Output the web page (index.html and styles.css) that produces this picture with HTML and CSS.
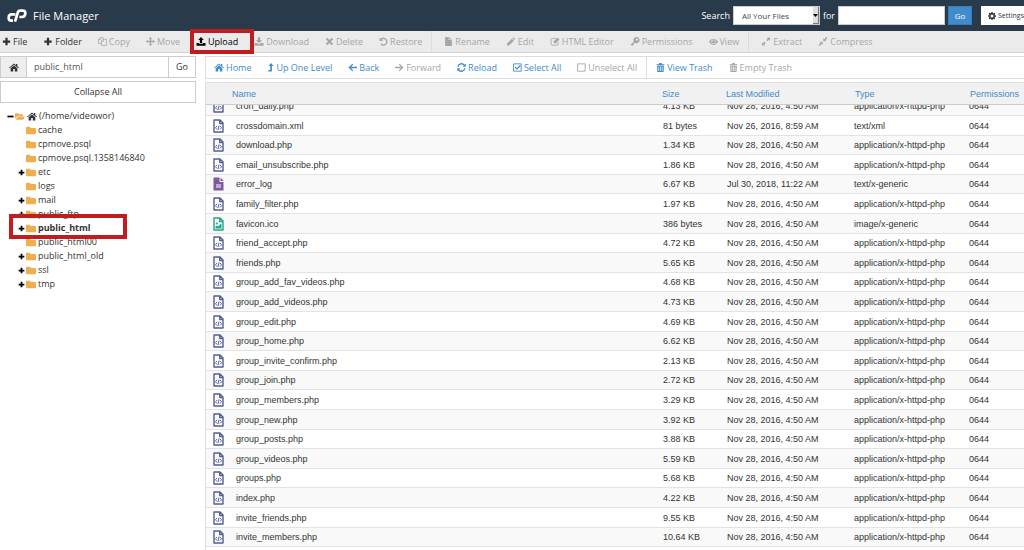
FILE: index.html
```html
<!DOCTYPE html>
<html lang="en">
  <head>
    <meta charset="UTF-8" />
    <title>File Manager</title>
    <link rel="stylesheet" href="styles.css">
  </head>
  <body>
    <!-- Icon sprite -->
    <svg class="sprite" aria-hidden="true">
      <symbol id="i-plus" viewBox="0 0 16 16"><path d="M6 1.500h4v4.500h4.500v4H10v4.500H6V10H1.500V6H6z"/></symbol>
      <symbol id="i-minus" viewBox="0 0 16 16"><path d="M1 6h14v4H1z"/></symbol>
      <symbol id="i-copy" viewBox="0 0 16 16"><path fill="none" stroke="currentColor" stroke-width="1.300" stroke-linejoin="round" d="M6 11.500H1V4.500L4 1h5v3M4 1v3.500H1M6 7.500L9 4h6v11H6zM9.500 4v3.500H6"/></symbol>
      <symbol id="i-move" viewBox="0 0 16 16"><path d="M8 0l3.200 3.200H9.200v3.600h3.600V4.800L16 8l-3.200 3.200V9.200H9.200v3.600h2L8 16l-3.200-3.200h2V9.200H3.200v2L0 8l3.200-3.200v2h3.600V3.200h-2z"/></symbol>
      <symbol id="i-upload" viewBox="0 0 16 16"><path d="M8 0l5 5.500h-3V11H6V5.500H3zM0 10.500h4.800V12.500h6.400v-2H16V15.500H0z"/></symbol>
      <symbol id="i-download" viewBox="0 0 16 16"><path d="M6 0.500h4V5.500h3.500L8 11 2.500 5.500H6zM0 10.500h4.500L8 13.500l3.500-3H16V15.500H0z"/></symbol>
      <symbol id="i-times" viewBox="0 0 16 16"><path d="M4 1.500l4 4 4-4L14.500 4l-4 4 4 4-2.500 2.500-4-4-4 4L1.500 12l4-4-4-4z"/></symbol>
      <symbol id="i-undo" viewBox="0 0 16 16"><path d="M1 1v6h6L5 5a4.500 4.500 0 1 1-.5 6.200L2.700 13A7 7 0 1 0 3.100 3.100z"/></symbol>
      <symbol id="i-file" viewBox="0 0 16 16"><path d="M2 0h6.500v5.500H14V16H2zM9.800 0L14 4.300H9.800z"/></symbol>
      <symbol id="i-pencil" viewBox="0 0 16 16"><path d="M12 .500L15.500 4 14 5.500 10.500 2zM9.500 3L13 6.500 4.500 15H1v-3.500z"/></symbol>
      <symbol id="i-edit" viewBox="0 0 16 16"><path fill="none" stroke="currentColor" stroke-width="1.500" d="M10 2.500H3A2 2 0 0 0 1 4.500V12.500a2 2 0 0 0 2 2h8.500a2 2 0 0 0 2-2V9"/><path d="M12.500 1L16 4.500l-6.500 6.500H6V7.500z"/></symbol>
      <symbol id="i-key" viewBox="0 0 16 16"><path fill-rule="evenodd" d="M10.500 0a5.500 5.500 0 1 1-3 10L5.500 12l1 1-1.300 1.300-1-1-.7.7 1 1L3 16 .500 13.500 6 8a5.500 5.500 0 0 1 4.500-8zM11.500 2.500a2 2 0 1 0 .1 4 2 2 0 0 0-.1-4z"/></symbol>
      <symbol id="i-eye" viewBox="0 0 16 16"><path fill-rule="evenodd" d="M0 8.500C2 5 5 3 8 3s6 2 8 5.500C14 12 11 14 8 14s-6-2-8-5.500zM8 4.500a4 4 0 1 0 0 8 4 4 0 0 0 0-8z"/><circle cx="8" cy="8.500" r="3"/><path fill="#ebebeb" d="M6 8a2 2 0 0 1 2-2v1a1 1 0 0 0-1 1z"/></symbol>
      <symbol id="i-expand" viewBox="0 0 16 16"><path d="M9.500 1H15v5.500L13.200 4.700 10.500 7.500 8.500 5.500l2.800-2.700zM1 9.500l1.800 1.800L5.500 8.500l2 2-2.700 2.700L6.500 15H1z"/></symbol>
      <symbol id="i-compress" viewBox="0 0 16 16"><path d="M8.500 2l1.800 1.800L14 0l2 2-3.800 3.700L14 7.500H8.500zM2 8.500h5.500V14l-1.800-1.800L2 16l-2-2 3.800-3.700z"/></symbol>
      <symbol id="i-home" viewBox="0 0 18 16"><path d="M9 4.200l6 5V15h-4.500v-4.500h-3V15H3V9.200zM9 .800l3.500 3V1.500H15v4.300l3 2.500-1 1.200L9 2.900 1 9.500 0 8.300z"/></symbol>
      <symbol id="i-level" viewBox="0 0 12 16"><path d="M7 0l4.500 5.500H8.500V15H1L3.500 12.500h2V5.500h-3z"/></symbol>
      <symbol id="i-left" viewBox="0 0 16 16"><path fill="none" stroke="currentColor" stroke-width="2.400" d="M8.500 2L2.500 8l6 6M3 8h13"/></symbol>
      <symbol id="i-right" viewBox="0 0 16 16"><path fill="none" stroke="currentColor" stroke-width="2.400" d="M7.500 2l6 6-6 6M13 8H0"/></symbol>
      <symbol id="i-reload" viewBox="0 0 16 16"><path d="M15.500 1v5.500H10l2-2A5 5 0 0 0 3.200 6.500H.700A7.300 7.300 0 0 1 13.600 2.800zM.500 15V9.500H6l-2 2a5 5 0 0 0 8.800-2h2.500a7.300 7.300 0 0 1-12.900 3.700z"/></symbol>
      <symbol id="i-checked" viewBox="0 0 16 16"><path fill="none" stroke="currentColor" stroke-width="1.600" d="M1 1.500h13.500v13H1z"/><path fill="none" stroke="currentColor" stroke-width="2.200" d="M4 7.500l3 3 6-6"/></symbol>
      <symbol id="i-unchecked" viewBox="0 0 16 16"><path fill="none" stroke="currentColor" stroke-width="1.600" d="M1 1.500h13.500v13H1z"/></symbol>
      <symbol id="i-trash" viewBox="0 0 14 16"><path fill-rule="evenodd" d="M5 0h4l1 2h4v1.700H0V2h4zM1 4.500h12L12.500 16h-11zM3.500 6v8h1.200V6zM6.400 6v8h1.200V6zM9.300 6v8h1.200V6z"/></symbol>
      <symbol id="i-cog" viewBox="0 0 16 16"><path fill-rule="evenodd" d="M6.800 0h2.400l.4 2.200 1.400.6L12.900 1.500l1.700 1.700-1.300 1.900.6 1.400 2.100.4v2.400l-2.200.4-.6 1.400 1.300 1.900-1.700 1.700-1.900-1.300-1.400.6L9.200 16H6.800l-.4-2.200-1.400-.6-1.900 1.300-1.700-1.700 1.300-1.900-.6-1.400L0 9.200V6.800l2.200-.4.600-1.400L1.500 3.100l1.700-1.700L5 2.700l1.400-.5zM8 5a3 3 0 1 0 0 6 3 3 0 0 0 0-6z"/></symbol>
      <symbol id="i-folder" viewBox="0 0 16 14"><path d="M0 2.500A1.500 1.500 0 0 1 1.500 1H6l1.500 2h7A1.500 1.500 0 0 1 16 4.500v7a1.500 1.500 0 0 1-1.500 1.500h-13A1.500 1.500 0 0 1 0 11.500z"/></symbol>
      <symbol id="i-folder-open" viewBox="0 0 18 14"><path d="M0 2.500A1.500 1.500 0 0 1 1.500 1H5.500L7 3h6a1.500 1.500 0 0 1 1.500 1.500V6H5L0 11zM5.500 7H18l-3.500 6H1z"/></symbol>
      <symbol id="i-code" viewBox="0 0 22 28"><path fill="none" stroke="currentColor" stroke-width="2.800" stroke-linejoin="round" d="M2 2h12l6 6v18H2zM13.500 2v7H20"/><path fill="none" stroke="currentColor" stroke-width="1.900" d="M8 14l-3 3.500 3 3.500M14 14l3 3.500-3 3.500M12 13l-2 9"/></symbol>
      <symbol id="i-text" viewBox="0 0 22 28"><path d="M2 1h11v9h8v17H1V2zM15 1l6 7h-6z"/><path stroke="#fff" stroke-width="2" d="M6 16h10M6 20h10"/></symbol>
      <symbol id="i-image" viewBox="0 0 22 28"><path fill="none" stroke="currentColor" stroke-width="2.800" stroke-linejoin="round" d="M2 2h12l6 6v18H2zM13.500 2v7H20"/><circle cx="7.500" cy="13" r="2"/><path d="M5 23v-4l3-2 2 2 6-6 1 1v9z"/></symbol>
    </svg>

    <header class="topbar">
      <svg class="logo" viewBox="0 0 60 42" aria-hidden="true"><path d="M25 16H14C8 16 5 20 5 26s3 9 8 9h5M24 38l8-26c1-5 4-7 8-7h7c6 0 8 4 8 8 0 7-4 11-10 11h-8"/></svg>
      <h1>File Manager</h1>
      <form class="search">
        <label for="scope">Search</label>
        <select id="scope"><option>All Your Files</option></select>
        <label for="query">for</label>
        <input id="query" type="text">
        <button class="btn-primary" type="button">Go</button>
      </form>
      <button class="settings" type="button"><svg class="icon"><use href="#i-cog"/></svg>Settings</button>
    </header>

    <nav class="toolbar">
      <button><svg class="icon"><use href="#i-plus"/></svg>File</button>
      <button><svg class="icon wide"><use href="#i-plus"/></svg>Folder</button>
      <button disabled><svg class="icon"><use href="#i-copy"/></svg>Copy</button>
      <button disabled><svg class="icon"><use href="#i-move"/></svg>Move</button>
      <button class="marked"><svg class="icon wide"><use href="#i-upload"/></svg>Upload</button>
      <button disabled><svg class="icon wide"><use href="#i-download"/></svg>Download</button>
      <button disabled><svg class="icon"><use href="#i-times"/></svg>Delete</button>
      <button disabled><svg class="icon"><use href="#i-undo"/></svg>Restore</button>
      <span class="divider"></span>
      <button disabled><svg class="icon"><use href="#i-file"/></svg>Rename</button>
      <button disabled><svg class="icon wide"><use href="#i-pencil"/></svg>Edit</button>
      <button disabled><svg class="icon wide"><use href="#i-edit"/></svg>HTML Editor</button>
      <button disabled><svg class="icon wide"><use href="#i-key"/></svg>Permissions</button>
      <button disabled><svg class="icon"><use href="#i-eye"/></svg>View</button>
      <span class="divider"></span>
      <button disabled><svg class="icon wide"><use href="#i-expand"/></svg>Extract</button>
      <button disabled><svg class="icon wide"><use href="#i-compress"/></svg>Compress</button>
    </nav>

    <div class="main">
      <aside class="sidebar">
        <form class="location">
          <label for="path" aria-label="Path"><svg class="icon wide"><use href="#i-home"/></svg></label>
          <input id="path" type="text" value="public_html">
          <button type="button">Go</button>
        </form>
        <button class="collapse">Collapse All</button>

        <ul class="tree">
          <li class="root"><svg class="twig"><use href="#i-minus"/></svg><svg class="folder open"><use href="#i-folder-open"/></svg><svg class="icon wide"><use href="#i-home"/></svg><a href="#">(/home/videowor)</a></li>
          <li><span class="twig"></span><svg class="folder"><use href="#i-folder"/></svg><a href="#">cache</a></li>
          <li><span class="twig"></span><svg class="folder"><use href="#i-folder"/></svg><a href="#">cpmove.psql</a></li>
          <li><span class="twig"></span><svg class="folder"><use href="#i-folder"/></svg><a href="#">cpmove.psql.1358146840</a></li>
          <li><svg class="twig"><use href="#i-plus"/></svg><svg class="folder"><use href="#i-folder"/></svg><a href="#">etc</a></li>
          <li><span class="twig"></span><svg class="folder"><use href="#i-folder"/></svg><a href="#">logs</a></li>
          <li><svg class="twig"><use href="#i-plus"/></svg><svg class="folder"><use href="#i-folder"/></svg><a href="#">mail</a></li>
          <li><svg class="twig"><use href="#i-plus"/></svg><svg class="folder"><use href="#i-folder"/></svg><a href="#">public_ftp</a></li>
          <li class="current"><svg class="twig"><use href="#i-plus"/></svg><svg class="folder"><use href="#i-folder"/></svg><a href="#">public_html</a></li>
          <li><span class="twig"></span><svg class="folder"><use href="#i-folder"/></svg><a href="#">public_html00</a></li>
          <li><svg class="twig"><use href="#i-plus"/></svg><svg class="folder"><use href="#i-folder"/></svg><a href="#">public_html_old</a></li>
          <li><svg class="twig"><use href="#i-plus"/></svg><svg class="folder"><use href="#i-folder"/></svg><a href="#">ssl</a></li>
          <li><svg class="twig"><use href="#i-plus"/></svg><svg class="folder"><use href="#i-folder"/></svg><a href="#">tmp</a></li>
        </ul>
      </aside>

      <section class="content">
        <nav class="actions">
          <button><svg class="icon wide"><use href="#i-home"/></svg>Home</button>
          <button><svg class="icon narrow"><use href="#i-level"/></svg>Up One Level</button>
          <button><svg class="icon"><use href="#i-left"/></svg>Back</button>
          <button disabled><svg class="icon"><use href="#i-right"/></svg>Forward</button>
          <button><svg class="icon"><use href="#i-reload"/></svg>Reload</button>
          <button><svg class="icon"><use href="#i-checked"/></svg>Select All</button>
          <button disabled><svg class="icon"><use href="#i-unchecked"/></svg>Unselect All</button>
          <span class="divider"></span>
          <button><svg class="icon"><use href="#i-trash"/></svg>View Trash</button>
          <button disabled><svg class="icon"><use href="#i-trash"/></svg>Empty Trash</button>
        </nav>

        <div class="files">
          <table>
            <thead>
              <tr><th class="col-icon"></th><th>Name</th><th class="col-size">Size</th><th class="col-date">Last Modified</th><th class="col-type">Type</th><th class="col-perm">Permissions</th></tr>
            </thead>
            <tbody>
              <tr><td><svg class="type"><use href="#i-code"/></svg></td><td>cron_daily.php</td><td>4.13 KB</td><td>Nov 28, 2016, 4:50 AM</td><td>application/x-httpd-php</td><td>0644</td></tr>
              <tr><td><svg class="type"><use href="#i-code"/></svg></td><td>crossdomain.xml</td><td>81 bytes</td><td>Nov 26, 2016, 8:59 AM</td><td>text/xml</td><td>0644</td></tr>
              <tr><td><svg class="type"><use href="#i-code"/></svg></td><td>download.php</td><td>1.34 KB</td><td>Nov 28, 2016, 4:50 AM</td><td>application/x-httpd-php</td><td>0644</td></tr>
              <tr><td><svg class="type"><use href="#i-code"/></svg></td><td>email_unsubscribe.php</td><td>1.86 KB</td><td>Nov 28, 2016, 4:50 AM</td><td>application/x-httpd-php</td><td>0644</td></tr>
              <tr><td><svg class="type text"><use href="#i-text"/></svg></td><td>error_log</td><td>6.67 KB</td><td>Jul 30, 2018, 11:22 AM</td><td>text/x-generic</td><td>0644</td></tr>
              <tr><td><svg class="type"><use href="#i-code"/></svg></td><td>family_filter.php</td><td>1.97 KB</td><td>Nov 28, 2016, 4:50 AM</td><td>application/x-httpd-php</td><td>0644</td></tr>
              <tr><td><svg class="type image"><use href="#i-image"/></svg></td><td>favicon.ico</td><td>386 bytes</td><td>Nov 28, 2016, 4:50 AM</td><td>image/x-generic</td><td>0644</td></tr>
              <tr><td><svg class="type"><use href="#i-code"/></svg></td><td>friend_accept.php</td><td>4.72 KB</td><td>Nov 28, 2016, 4:50 AM</td><td>application/x-httpd-php</td><td>0644</td></tr>
              <tr><td><svg class="type"><use href="#i-code"/></svg></td><td>friends.php</td><td>5.65 KB</td><td>Nov 28, 2016, 4:50 AM</td><td>application/x-httpd-php</td><td>0644</td></tr>
              <tr><td><svg class="type"><use href="#i-code"/></svg></td><td>group_add_fav_videos.php</td><td>4.68 KB</td><td>Nov 28, 2016, 4:50 AM</td><td>application/x-httpd-php</td><td>0644</td></tr>
              <tr><td><svg class="type"><use href="#i-code"/></svg></td><td>group_add_videos.php</td><td>4.73 KB</td><td>Nov 28, 2016, 4:50 AM</td><td>application/x-httpd-php</td><td>0644</td></tr>
              <tr><td><svg class="type"><use href="#i-code"/></svg></td><td>group_edit.php</td><td>4.69 KB</td><td>Nov 28, 2016, 4:50 AM</td><td>application/x-httpd-php</td><td>0644</td></tr>
              <tr><td><svg class="type"><use href="#i-code"/></svg></td><td>group_home.php</td><td>6.62 KB</td><td>Nov 28, 2016, 4:50 AM</td><td>application/x-httpd-php</td><td>0644</td></tr>
              <tr><td><svg class="type"><use href="#i-code"/></svg></td><td>group_invite_confirm.php</td><td>2.13 KB</td><td>Nov 28, 2016, 4:50 AM</td><td>application/x-httpd-php</td><td>0644</td></tr>
              <tr><td><svg class="type"><use href="#i-code"/></svg></td><td>group_join.php</td><td>2.72 KB</td><td>Nov 28, 2016, 4:50 AM</td><td>application/x-httpd-php</td><td>0644</td></tr>
              <tr><td><svg class="type"><use href="#i-code"/></svg></td><td>group_members.php</td><td>3.29 KB</td><td>Nov 28, 2016, 4:50 AM</td><td>application/x-httpd-php</td><td>0644</td></tr>
              <tr><td><svg class="type"><use href="#i-code"/></svg></td><td>group_new.php</td><td>3.92 KB</td><td>Nov 28, 2016, 4:50 AM</td><td>application/x-httpd-php</td><td>0644</td></tr>
              <tr><td><svg class="type"><use href="#i-code"/></svg></td><td>group_posts.php</td><td>3.88 KB</td><td>Nov 28, 2016, 4:50 AM</td><td>application/x-httpd-php</td><td>0644</td></tr>
              <tr><td><svg class="type"><use href="#i-code"/></svg></td><td>group_videos.php</td><td>5.59 KB</td><td>Nov 28, 2016, 4:50 AM</td><td>application/x-httpd-php</td><td>0644</td></tr>
              <tr><td><svg class="type"><use href="#i-code"/></svg></td><td>groups.php</td><td>5.68 KB</td><td>Nov 28, 2016, 4:50 AM</td><td>application/x-httpd-php</td><td>0644</td></tr>
              <tr><td><svg class="type"><use href="#i-code"/></svg></td><td>index.php</td><td>4.22 KB</td><td>Nov 28, 2016, 4:50 AM</td><td>application/x-httpd-php</td><td>0644</td></tr>
              <tr><td><svg class="type"><use href="#i-code"/></svg></td><td>invite_friends.php</td><td>9.55 KB</td><td>Nov 28, 2016, 4:50 AM</td><td>application/x-httpd-php</td><td>0644</td></tr>
              <tr><td><svg class="type"><use href="#i-code"/></svg></td><td>invite_members.php</td><td>10.64 KB</td><td>Nov 28, 2016, 4:50 AM</td><td>application/x-httpd-php</td><td>0644</td></tr>
            </tbody>
          </table>
        </div>
      </section>
    </div>
  </body>
</html>
```

FILE: styles.css
```css
*, *::after {
  box-sizing: border-box;
}

html, body {
  height: 100%;
}

body {
  display: flex;
  flex-direction: column;
  margin: 0;
  overflow: hidden;
  background: #fff;
  color: #333;
  font: 9px/14px 'Open Sans', 'Noto Sans', sans-serif;
}

button, input, select {
  margin: 0;
  border-radius: 0;
  font: inherit;
  color: inherit;
}

button {
  cursor: pointer;
  white-space: nowrap;
}

.sprite {
  display: none;
}

.icon {
  flex: none;
  width: 9px;
  height: 9px;
  fill: currentColor;
}

.icon.wide {
  width: 10px;
}

.icon.narrow {
  width: 7px;
}

/* Top bar */
.topbar {
  display: flex;
  flex: none;
  align-items: center;
  height: 31px;
  padding-left: 7px;
  background: #293a4a;
  color: #fff;
}

.logo {
  width: 20px;
  height: 14px;
  margin-right: 6px;
  fill: none;
  stroke: #fff;
  stroke-width: 8;
  stroke-linejoin: round;
}

.topbar h1 {
  margin: 0 auto 0 0;
  font-size: 11px;
  font-weight: normal;
  line-height: 20px;
}

.search {
  display: flex;
  align-items: center;
  gap: 3px;
}

.search select,
.search input {
  height: 19px;
  border: 1px solid #ccc;
  background: #fff;
  color: #444;
}

.search select {
  width: 87px;
  padding: 0 8px;
  appearance: none;
  background:
    url("data:image/svg+xml,%3Csvg xmlns='http://www.w3.org/2000/svg' width='6' height='17'%3E%3Cpath fill='%23ddd' d='M0 0h6v17H0z'/%3E%3Cpath fill='%23777' d='M5 0h1v17H0v-1h5z'/%3E%3Cpath d='M0 7h5L2.500 10z'/%3E%3C/svg%3E") right center no-repeat #fff;
  font-size: 8px;
}

.search input {
  width: 107px;
}

.btn-primary {
  width: 24px;
  height: 19px;
  padding: 0;
  border: 1px solid #357ebd;
  background: #428bca;
  color: #fff;
  font-size: 8px;
}

.settings {
  display: flex;
  align-items: center;
  gap: 2px;
  height: 19px;
  margin-left: 9px;
  padding: 0 0 0 7px;
  border: 0;
  background: #fff;
  font-size: 7px;
  color: #333;
}

.settings .icon {
  width: 8px;
  height: 8px;
}

/* Toolbars */
.toolbar,
.actions {
  display: flex;
  flex: none;
  align-items: stretch;
}

.toolbar {
  height: 22px;
  padding-right: 8px;
  border-bottom: 1px solid #d5d5d5;
  background: #ebebeb;
}

.toolbar button,
.actions button {
  display: flex;
  align-items: center;
  gap: 2px;
  padding: 0 8px;
  border: 0;
  background: none;
}

.toolbar button:first-child {
  padding-left: 2px;
}

.toolbar button:disabled,
.actions button:disabled {
  color: #a6a6a6;
  cursor: default;
}

.divider {
  width: 1px;
  margin: 0 4px 0 1px;
  background: #ddd;
}

/* Highlight frames */
.marked,
.current {
  position: relative;
}

.toolbar .marked {
  color: #000;
}

.marked::after,
.current::after {
  content: "";
  position: absolute;
  z-index: 2;
  border: 4px solid #c01d1f;
}

.marked::after {
  inset: -2px -8px -2px 2px;
}

.current::after {
  top: -7px;
  left: 9px;
  width: 118px;
  height: 25px;
}

/* Sidebar */
.main {
  display: flex;
  flex: 1;
  gap: 9px;
  min-height: 0;
  padding-top: 3px;
}

.sidebar {
  flex: none;
  width: 196px;
}

.location {
  display: flex;
  height: 22px;
  border: 1px solid #ccc;
}

.location label {
  display: flex;
  align-items: center;
  justify-content: center;
  width: 26px;
  border-right: 1px solid #ccc;
  background: #eee;
}

.location input {
  flex: 1;
  min-width: 0;
  padding: 0 7px;
  border: 0;
  color: #555;
}

.location button {
  width: 27px;
  padding: 0;
  border: 0;
  border-left: 1px solid #ccc;
  background: #fff;
}

.collapse {
  display: block;
  width: 100%;
  height: 22px;
  margin-top: 3px;
  border: 1px solid #ccc;
  background: #fff;
}

.tree {
  margin: 6px 0 0;
  padding: 0;
  list-style: none;
}

.tree li {
  display: flex;
  align-items: center;
  height: 14px;
  padding-left: 18px;
}

.tree .root {
  padding-left: 7px;
}

.tree a {
  margin-left: 2px;
  color: inherit;
  text-decoration: none;
}

.twig {
  width: 7px;
  height: 7px;
  margin-right: 1px;
}

.folder {
  width: 10px;
  height: 9px;
  fill: #f0ad4e;
}

.folder.open {
  margin-right: 2px;
}

.current {
  font-weight: bold;
}

/* File list */
.content {
  display: flex;
  flex: 1;
  flex-direction: column;
  gap: 3px;
  min-width: 0;
}

.actions {
  height: 23px;
  border: 1px solid #ddd;
  border-right: 0;
  color: #428bca;
}

.actions .divider {
  margin: 0 1px;
}

.files {
  flex: 1;
  min-height: 0;
  overflow: hidden;
  border: 1px solid #ddd;
  border-width: 1px 0 0 1px;
}

/* the list is scrolled by part of a row, under the sticky header */
.files table {
  width: 100%;
  margin-top: -9px;
  table-layout: fixed;
  border-spacing: 0;
  font: 9px/12px 'Liberation Sans', Arial, sans-serif;
}

.files th {
  position: sticky;
  top: 0;
  z-index: 1;
  height: 22px;
  padding: 0;
  border-bottom: 1px solid #ccc;
  background: #f1f1f1;
  color: #428bca;
  font-weight: normal;
  text-align: left;
}

.files td {
  height: 20px;
  padding: 0 0 0 1px;
  border-bottom: 1px solid #e3e3e3;
  white-space: nowrap;
}

.files tr:nth-child(5n) td,
.files tr:nth-child(5n+3) td {
  height: 19px;
}

.files tbody tr:nth-child(odd) {
  background: #f9f9f9;
}

.files td:first-child {
  padding-left: 7px;
}

.files td:nth-child(2) {
  padding-left: 4px;
}

.files td:nth-child(n+5) {
  padding-left: 0;
}

.files th:nth-child(n+5) {
  padding-left: 1px;
}

.col-icon { width: 26px; }
.col-size { width: 64px; }
.col-date { width: 128px; }
.col-type { width: 115px; }
.col-perm { width: 55px; }

.type {
  display: block;
  width: 11px;
  height: 14px;
  fill: currentColor;
  color: #565d92;
}

.type.text {
  color: #7e5a9b;
}

.type.image {
  color: #1ea78a;
}
```
